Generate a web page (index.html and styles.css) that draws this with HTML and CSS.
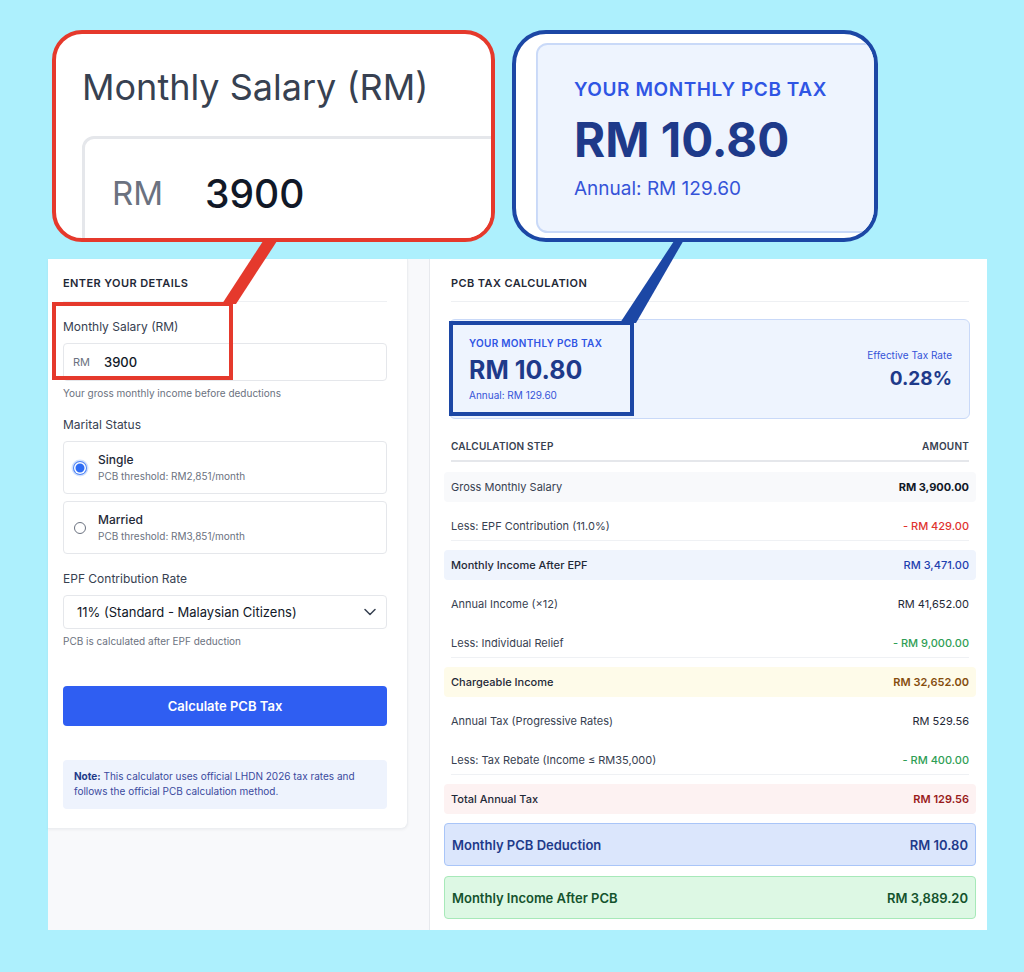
FILE: index.html
```html
<!DOCTYPE html>
<html lang="en">
<head>
<meta charset="utf-8">
<title>Malaysia PCB Tax Calculator 2026</title>
<link rel="stylesheet" href="styles.css">
</head>
<body>

<div class="zooms">
  <!-- magnified salary input -->
  <div class="lens lens-red">
    <div class="lens-salary">
      <span class="field-label">Monthly Salary (RM)</span>
      <div class="money-input"><span class="prefix">RM</span><span class="value">3900</span></div>
    </div>
  </div>
  <!-- magnified monthly result (left column only fits in the lens) -->
  <div class="lens lens-blue">
    <div class="lens-result">
      <div class="result-box">
        <div class="result-main">
          <div class="result-label">Your Monthly PCB Tax</div>
          <div class="result-amount">RM 10.80</div>
          <div class="result-sub">Annual: RM 129.60</div>
        </div>
      </div>
    </div>
  </div>
</div>

<main class="app">
  <section class="form-card">
    <h2 class="panel-title">Enter Your Details</h2>

    <div class="field">
      <span class="field-label">Monthly Salary (RM)</span>
      <div class="money-input"><span class="prefix">RM</span><span class="value">3900</span></div>
      <p class="hint">Your gross monthly income before deductions</p>
    </div>

    <div class="field">
      <span class="field-label">Marital Status</span>
      <div class="options">
        <div class="option">
          <span class="radio radio-on"></span>
          <div class="option-text">
            <div class="option-title">Single</div>
            <div class="option-sub">PCB threshold: RM2,851/month</div>
          </div>
        </div>
        <div class="option">
          <span class="radio"></span>
          <div class="option-text">
            <div class="option-title">Married</div>
            <div class="option-sub">PCB threshold: RM3,851/month</div>
          </div>
        </div>
      </div>
    </div>

    <div class="field">
      <span class="field-label">EPF Contribution Rate</span>
      <div class="select">
        <span>11% (Standard - Malaysian Citizens)</span>
        <svg class="chevron" width="12" height="8" viewBox="0 0 12 8"><polyline points="1,1.5 6,6.5 11,1.5" fill="none" stroke="#374151" stroke-width="1.5" stroke-linecap="round" stroke-linejoin="round"/></svg>
      </div>
      <p class="hint">PCB is calculated after EPF deduction</p>
    </div>

    <button class="calc-btn" type="button">Calculate PCB Tax</button>

    <p class="note"><strong>Note:</strong> <span>This calculator uses official LHDN 2026 tax rates and follows the official PCB calculation method.</span></p>
  </section>

  <section class="results">
    <h2 class="panel-title">PCB Tax Calculation</h2>

    <div class="result-box result-box-panel">
      <div class="result-main">
        <div class="result-label">Your Monthly PCB Tax</div>
        <div class="result-amount">RM 10.80</div>
        <div class="result-sub">Annual: RM 129.60</div>
      </div>
      <div class="result-rate">
        <div class="rate-label">Effective Tax Rate</div>
        <div class="rate-value">0.28%</div>
      </div>
    </div>

    <div class="steps-head"><span>Calculation Step</span><span>Amount</span></div>

    <div class="steps">
      <div class="step step-gray"><span>Gross Monthly Salary</span><span class="amt amt-strong">RM 3,900.00</span></div>
      <div class="step step-sep"><span>Less: EPF Contribution (11.0%)</span><span class="amt amt-red">- RM 429.00</span></div>
      <div class="step step-blue"><span class="lbl-strong">Monthly Income After EPF</span><span class="amt amt-blue">RM 3,471.00</span></div>
      <div class="step"><span>Annual Income (×12)</span><span class="amt">RM 41,652.00</span></div>
      <div class="step step-sep"><span>Less: Individual Relief</span><span class="amt amt-green">- RM 9,000.00</span></div>
      <div class="step step-yellow"><span class="lbl-strong">Chargeable Income</span><span class="amt amt-brown">RM 32,652.00</span></div>
      <div class="step"><span>Annual Tax (Progressive Rates)</span><span class="amt">RM 529.56</span></div>
      <div class="step step-sep"><span>Less: Tax Rebate (Income ≤ RM35,000)</span><span class="amt amt-green">- RM 400.00</span></div>
      <div class="step step-red"><span class="lbl-strong">Total Annual Tax</span><span class="amt amt-darkred">RM 129.56</span></div>
    </div>

    <div class="total total-blue"><span>Monthly PCB Deduction</span><span>RM 10.80</span></div>
    <div class="total total-green"><span>Monthly Income After PCB</span><span>RM 3,889.20</span></div>
  </section>
</main>

<!-- callout pointers and highlight frames -->
<svg class="marks" width="1024" height="972" viewBox="0 0 1024 972">
  <polygon points="265,238 279,238 236,304 222,304" fill="#e5392c"/>
  <rect x="54" y="304" width="177" height="74" fill="none" stroke="#e5392c" stroke-width="4"/>
  <polygon points="676,238 685,238 636,323 620,323" fill="#1c47a5"/>
  <rect x="451" y="323" width="181" height="91" fill="none" stroke="#1c47a5" stroke-width="4"/>
</svg>

</body>
</html>
```

FILE: styles.css
```css
* {
  box-sizing: border-box;
}

body {
  margin: 0;
  width: 1024px;
  height: 972px;
  background: #adf0fd;
  font-family: Inter, "Noto Sans", "Liberation Sans", sans-serif;
  color: #1f2937;
  position: relative;
  overflow: hidden;
}

/* ---------- magnifier callouts ---------- */
.zooms {
  display: flex;
  gap: 17px;
  padding: 30px 0 0 52px;
}

.lens {
  flex: none;
  height: 212px;
  background: #fff;
  overflow: hidden;
}

.lens-red {
  width: 443px;
  border: 4px solid #e5392c;
  border-radius: 30px;
}

.lens-blue {
  width: 366px;
  border: 4px solid #1c47a5;
  border-radius: 34px;
}

.lens-salary {
  width: 325px;
  margin: 30px 0 0 26px;
  transform: scale(3);
  transform-origin: 0 0;
}

.lens-result {
  width: 521px;
  margin: 9px 0 0 20px;
  transform: scale(1.9);
  transform-origin: 0 0;
}

.marks {
  position: absolute;
  left: 0;
  top: 0;
  pointer-events: none;
}

/* ---------- app shell ---------- */
.app {
  display: flex;
  align-items: flex-start;
  gap: 21px;
  width: 939px;
  height: 671px;
  margin: 17px 0 0 48px;
  background: #f8f9fb;
}

.form-card {
  flex: none;
  width: 360px;
  height: 570px;
  background: #fff;
  border-right: 1px solid #eceef1;
  border-bottom: 1px solid #eceef1;
  border-radius: 0 0 7px 0;
  box-shadow: 0 1px 3px rgba(15, 23, 42, 0.05);
  padding: 16px 20px 0 15px;
}

.results {
  flex: none;
  width: 558px;
  height: 671px;
  background: #fff;
  border-left: 1px solid #e7e9ed;
  padding: 16px 18px 0 21px;
}

.panel-title {
  margin: 0;
  padding-bottom: 10px;
  border-bottom: 1px solid #eef0f3;
  font-size: 11px;
  line-height: 16px;
  font-weight: 600;
  letter-spacing: 0.4px;
  text-transform: uppercase;
  color: #1f2937;
}

/* ---------- form ---------- */
.field {
  margin-top: 17px;
}

.field-label {
  display: block;
  margin-bottom: 8px;
  font-size: 12px;
  line-height: 16px;
  color: #374151;
}

.money-input {
  display: flex;
  align-items: center;
  height: 38px;
  padding-left: 9px;
  background: #fff;
  border: 1px solid #e5e7eb;
  border-radius: 4px;
}

.prefix {
  width: 31px;
  font-size: 11px;
  color: #6b7280;
}

.value {
  font-size: 13px;
  font-weight: 500;
  color: #111827;
}

.hint {
  margin: 5px 0 0;
  font-size: 10px;
  line-height: 14px;
  color: #6b7280;
}

.options {
  display: flex;
  flex-direction: column;
  gap: 7px;
}

.option {
  display: flex;
  align-items: center;
  gap: 12px;
  height: 53px;
  padding: 0 10px;
  border: 1px solid #e5e7eb;
  border-radius: 4px;
}

.radio {
  flex: none;
  width: 12px;
  height: 12px;
  border-radius: 50%;
  border: 1px solid #6b7280;
  background: #fff;
}

.radio-on {
  border: 0;
  background: #2f6cf4;
  box-shadow: inset 0 0 0 1.5px #fff, 0 0 0 1px #4f84f6, 0 0 0 2.5px #d3e2fd;
}

.option-title {
  font-size: 12px;
  line-height: 16px;
  font-weight: 500;
  color: #1f2937;
}

.option-sub {
  margin-top: 1px;
  font-size: 10px;
  line-height: 14px;
  color: #6b7280;
}

.select {
  display: flex;
  align-items: center;
  justify-content: space-between;
  height: 34px;
  padding: 0 10px 0 13px;
  border: 1px solid #e5e7eb;
  border-radius: 4px;
  font-size: 13px;
  color: #111827;
}

.chevron {
  display: block;
}

.calc-btn {
  display: block;
  width: 100%;
  height: 40px;
  margin-top: 38px;
  border: 0;
  border-radius: 4px;
  background: #2f5ef2;
  color: #fff;
  font-family: inherit;
  font-size: 13px;
  font-weight: 600;
}

.note {
  margin: 34px 0 0;
  padding: 9px 11px 10px;
  background: #eef3fd;
  border-radius: 4px;
  font-size: 10px;
  line-height: 15px;
  color: #3a4a9e;
}

.note strong {
  font-weight: 700;
  color: #1e3a8a;
}

/* ---------- result summary ---------- */
.result-box {
  display: flex;
  align-items: center;
  justify-content: space-between;
  width: 521px;
  height: 100px;
  padding: 17px 17px 16px 19px;
  background: #eef4fe;
  border: 1px solid #c9d9f8;
  border-radius: 6px;
}

.result-box-panel {
  margin: 17px 0 0 -2px;
}

.result-label {
  font-size: 10px;
  line-height: 12px;
  font-weight: 600;
  letter-spacing: 0.3px;
  text-transform: uppercase;
  color: #2f55e4;
}

.result-amount {
  margin-top: 6px;
  font-size: 25px;
  line-height: 30px;
  font-weight: 700;
  color: #1e3a8a;
}

.result-sub {
  margin-top: 3px;
  font-size: 10px;
  line-height: 14px;
  color: #3553d8;
}

.result-rate {
  text-align: right;
}

.rate-label {
  font-size: 10px;
  line-height: 14px;
  color: #3553d8;
}

.rate-value {
  margin-top: 5px;
  font-size: 19px;
  line-height: 24px;
  font-weight: 700;
  color: #1e3a8a;
}

/* ---------- calculation table ---------- */
.steps-head {
  display: flex;
  justify-content: space-between;
  margin-top: 20px;
  padding-bottom: 7px;
  border-bottom: 2px solid #e5e7eb;
  font-size: 10px;
  line-height: 14px;
  font-weight: 600;
  letter-spacing: 0.2px;
  text-transform: uppercase;
  color: #374151;
}

.steps {
  display: flex;
  flex-direction: column;
  gap: 9px;
  margin: 10px -7px 0;
}

.step {
  display: flex;
  align-items: center;
  justify-content: space-between;
  height: 30px;
  padding: 0 7px;
  border-radius: 4px;
  font-size: 11px;
  color: #374151;
}

.step-sep {
  background: linear-gradient(#eff1f4, #eff1f4) no-repeat 50% 100% / calc(100% - 14px) 1px;
}

.step-gray { background: #f8f9fb; }
.step-blue { background: #eff4fd; }
.step-yellow { background: #fefbe9; }
.step-red { background: #fdf2f2; }

.lbl-strong {
  font-weight: 500;
  color: #1f2937;
}

.amt { color: #1f2937; }
.amt-strong { font-weight: 700; color: #111827; }
.amt-red { font-weight: 500; color: #e0332f; }
.amt-blue { font-weight: 500; color: #1e40af; }
.amt-green { font-weight: 500; color: #2f9e55; }
.amt-brown { font-weight: 600; color: #854d0e; }
.amt-darkred { font-weight: 600; color: #991b1b; }

.total {
  display: flex;
  align-items: center;
  justify-content: space-between;
  height: 43px;
  margin: 9px -7px 0;
  padding: 0 7px;
  border-radius: 4px;
  font-size: 13px;
  font-weight: 600;
}

.total-blue {
  background: #dbe6fc;
  border: 1px solid #a9c5f8;
  color: #1e3a8a;
}

.total-green {
  margin-top: 10px;
  background: #ddf8e4;
  border: 1px solid #a7e9b9;
  color: #14532d;
}
```
